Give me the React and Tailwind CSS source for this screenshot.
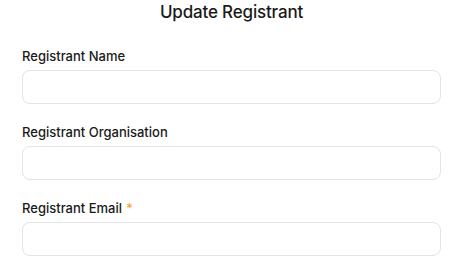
export default function App() {
  const fields = [
    { label: 'Registrant Name' },
    { label: 'Registrant Organisation' },
    { label: 'Registrant Email', required: true },
  ]

  return (
    <div className="w-[474px] h-[268px] bg-white overflow-hidden" style={{ fontFamily: 'Inter, "Noto Sans", sans-serif' }}>
      <div className="w-[463px] px-[22px]">
        <h2 className="text-center text-[17px] leading-[24px] font-medium text-[#1a1a1a] tracking-[-0.01em]">
          Update Registrant
        </h2>

        <div className="mt-[22px] flex flex-col gap-[18px]">
          {fields.map((f) => (
            <div key={f.label}>
              <label className="block text-[13px] leading-[20px] font-medium text-[#1a1a1a] mb-[4px]">
                {f.label}
                {f.required && <span className="text-[#f0a24a] ml-[4px]">*</span>}
              </label>
              <input
                type="text"
                className="block w-full h-[34px] rounded-[8px] border border-[#e4e4e4] bg-white px-3 text-[13px] outline-none"
              />
            </div>
          ))}
        </div>
      </div>
    </div>
  )
}
